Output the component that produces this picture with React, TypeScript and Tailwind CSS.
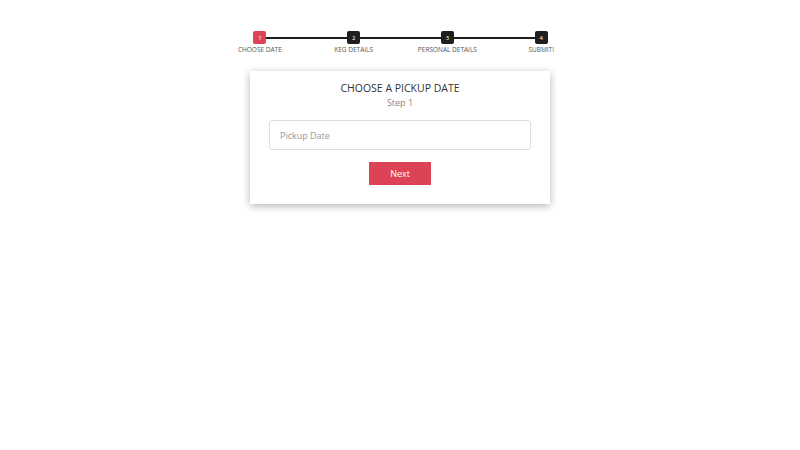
const steps = [
  { n: 1, label: 'CHOOSE DATE' },
  { n: 2, label: 'KEG DETAILS' },
  { n: 3, label: 'PERSONAL DETAILS' },
  { n: 4, label: 'SUBMIT!' },
];

function Stepper({ current }: { current: number }) {
  return (
    <div className="w-[325px] overflow-hidden">
      <div className="relative ml-[-17px] w-[375px] grid grid-cols-4">
        <div className="absolute left-[47px] w-[281px] top-[6px] h-[2px] bg-[#1e1e1e]" />
        {steps.map((s) => (
          <div key={s.n} className="flex flex-col items-center">
            <div
              className={`relative w-[13px] h-[13px] rounded-[2px] flex items-center justify-center text-[6px] text-white leading-none ${
                s.n === current ? 'bg-[#dc4356]' : 'bg-[#1e1e1e]'
              }`}
            >
              {s.n}
            </div>
            <span className="mt-[1px] whitespace-nowrap text-[6.5px] leading-[10px] text-[#555]">{s.label}</span>
          </div>
        ))}
      </div>
    </div>
  );
}

export default function App() {
  return (
    <div className="w-[800px] h-[450px] bg-white flex flex-col font-['Open_Sans',sans-serif]">
      <div className="mt-[31px] pl-[230px]">
        <Stepper current={1} />
      </div>
      <div className="mt-[16px] mx-auto w-[300px] bg-white shadow-[0_2px_8px_rgba(0,0,0,0.3)] flex flex-col items-center pt-[11px] pb-[19px] px-[19px]">
        <h2 className="text-[10.5px] leading-[12px] text-[#333]">CHOOSE A PICKUP DATE</h2>
        <p className="mt-[3px] text-[9px] leading-[12px] text-[#888]">Step 1</p>
        <input
          placeholder="Pickup Date"
          className="mt-[11px] w-full h-[30px] border border-[#ddd] rounded-[3px] px-[10px] text-[9px] placeholder-[#999] outline-none"
        />
        <button className="mt-[12px] w-[62px] h-[23px] bg-[#dc4356] text-white text-[9px]">Next</button>
      </div>
    </div>
  );
}
